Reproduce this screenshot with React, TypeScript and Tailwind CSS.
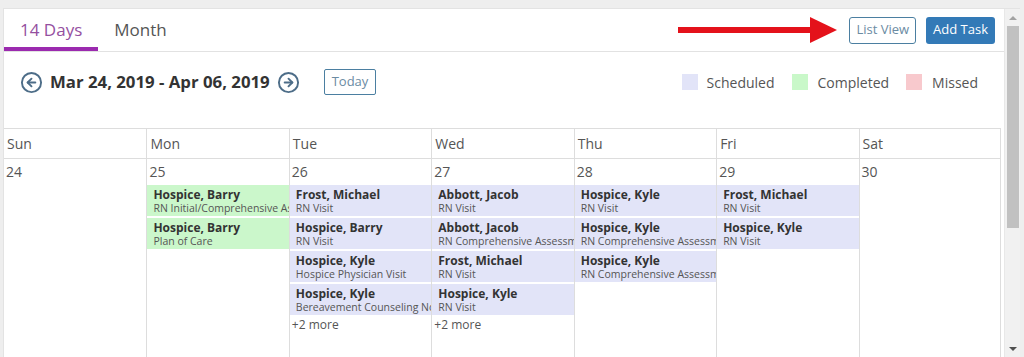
import { CircleArrowLeft, CircleArrowRight } from "lucide-react";

type Task = {
  name: string;
  type: string;
  status: "scheduled" | "completed";
};

interface Day {
  date: number;
  tasks: Task[];
  more?: number;
}

const dayNames = ["Sun", "Mon", "Tue", "Wed", "Thu", "Fri", "Sat"];

const days: Day[] = [
  { date: 24, tasks: [] },
  {
    date: 25,
    tasks: [
      { name: "Hospice, Barry", type: "RN Initial/Comprehensive Assessment", status: "completed" },
      { name: "Hospice, Barry", type: "Plan of Care", status: "completed" },
    ],
  },
  {
    date: 26,
    tasks: [
      { name: "Frost, Michael", type: "RN Visit", status: "scheduled" },
      { name: "Hospice, Barry", type: "RN Visit", status: "scheduled" },
      { name: "Hospice, Kyle", type: "Hospice Physician Visit", status: "scheduled" },
      { name: "Hospice, Kyle", type: "Bereavement Counseling Note", status: "scheduled" },
    ],
    more: 2,
  },
  {
    date: 27,
    tasks: [
      { name: "Abbott, Jacob", type: "RN Visit", status: "scheduled" },
      { name: "Abbott, Jacob", type: "RN Comprehensive Assessment", status: "scheduled" },
      { name: "Frost, Michael", type: "RN Visit", status: "scheduled" },
      { name: "Hospice, Kyle", type: "RN Visit", status: "scheduled" },
    ],
    more: 2,
  },
  {
    date: 28,
    tasks: [
      { name: "Hospice, Kyle", type: "RN Visit", status: "scheduled" },
      { name: "Hospice, Kyle", type: "RN Comprehensive Assessment", status: "scheduled" },
      { name: "Hospice, Kyle", type: "RN Comprehensive Assessment", status: "scheduled" },
    ],
  },
  {
    date: 29,
    tasks: [
      { name: "Frost, Michael", type: "RN Visit", status: "scheduled" },
      { name: "Hospice, Kyle", type: "RN Visit", status: "scheduled" },
    ],
  },
  { date: 30, tasks: [] },
];

function TaskCard({ task }: { task: Task }) {
  return (
    <div
      className={`h-[31px] pl-[6px] pt-[3px] overflow-hidden whitespace-nowrap ${
        task.status === "completed" ? "bg-[#cbf7cb]" : "bg-[#e2e4f8]"
      }`}
    >
      <div className="text-[12px] leading-[14px] font-bold text-[#333]">{task.name}</div>
      <div className="text-[10.5px] leading-[12px] text-[#555]">{task.type}</div>
    </div>
  );
}

function RedArrow() {
  return (
    <svg width="160" height="28" viewBox="0 0 160 28" className="mr-[11px]">
      <rect x="0" y="11" width="138" height="6" fill="#e4121b" />
      <polygon points="132,1 159,14 132,27" fill="#e4121b" />
    </svg>
  );
}

function Scrollbar() {
  return (
    <div className="w-4 shrink-0 bg-[#f1f1f1] border-l border-[#e8e8e8] flex flex-col items-center">
      <div className="h-[17px] flex items-center justify-center">
        <div className="w-0 h-0 border-l-[4px] border-r-[4px] border-b-[4px] border-l-transparent border-r-transparent border-b-[#a3a3a3]" />
      </div>
      <div className="w-[12px] h-[202px] bg-[#c1c1c1]" />
      <div className="flex-1" />
      <div className="h-[17px] flex items-center justify-center">
        <div className="w-0 h-0 border-l-[4px] border-r-[4px] border-t-[4px] border-l-transparent border-r-transparent border-t-[#505050]" />
      </div>
    </div>
  );
}

export default function App() {
  return (
    <div className="h-[357px] overflow-hidden bg-[#eeeeee] pt-2 pl-[3px] pr-1 font-['Open_Sans',sans-serif]">
      <div className="flex h-[349px] bg-white border-l border-t border-[#e3e3e3]">
        <div className="flex-1 min-w-0">
          {/* Tabs */}
          <div className="h-[43px] flex items-stretch justify-between border-b border-[#e2e2e2]">
            <div className="flex items-stretch">
              <div className="px-4 pt-1 flex items-center border-b-4 border-[#9b2aaf] text-[17px] text-[#94509f]">
                14 Days
              </div>
              <div className="px-4 pt-1 flex items-center border-b-4 border-transparent text-[17px] text-[#555]">
                Month
              </div>
            </div>
            <div className="flex items-center pr-[9px]">
              <RedArrow />
              <button
                type="button"
                className="h-[27px] px-[6px] border border-[#4b7fa1] rounded-[3px] text-[13px] text-[#6b8ba3] bg-white"
              >
                List View
              </button>
              <button
                type="button"
                className="ml-[10px] h-[27px] px-[7px] rounded-[3px] text-[13px] text-white bg-[#337ab7]"
              >
                Add Task
              </button>
            </div>
          </div>

          {/* Range + legend */}
          <div className="h-[76px] pt-[17px] flex items-start justify-between pl-[16px] pr-[26px]">
            <div className="h-[26px] flex items-center">
              <CircleArrowLeft className="w-[23px] h-[23px] text-[#4d6d88]" strokeWidth={2} />
              <span className="ml-[7px] text-[16.8px] font-bold text-[#333]">
                Mar 24, 2019 - Apr 06, 2019
              </span>
              <CircleArrowRight className="ml-[7px] w-[23px] h-[23px] text-[#4d6d88]" strokeWidth={2} />
              <button
                type="button"
                className="ml-[24px] h-[26px] px-[7px] border border-[#4b7fa1] rounded-[2px] text-[13px] text-[#6b8ba3]"
              >
                Today
              </button>
            </div>
            <div className="h-[26px] flex items-center text-[14px] text-[#555]">
              <span className="w-4 h-4 bg-[#e2e4f8]" />
              <span className="ml-[9px]">Scheduled</span>
              <span className="ml-[17px] w-4 h-4 bg-[#c9f8c9]" />
              <span className="ml-[10px]">Completed</span>
              <span className="ml-[17px] w-4 h-4 bg-[#f8c9cd]" />
              <span className="ml-[10px]">Missed</span>
            </div>
          </div>

          {/* Calendar */}
          <div className="w-[997px] border-t border-[#dddddd]">
            <div className="grid grid-cols-7 border-b border-[#dddddd]">
              {dayNames.map((d, i) => (
                <div
                  key={d}
                  className={`h-[29px] px-[3px] flex items-center text-[14px] text-[#555] ${
                    i > 0 ? "border-l border-[#dddddd]" : ""
                  } ${i === 6 ? "border-r" : ""}`}
                >
                  {d}
                </div>
              ))}
            </div>
            <div className="grid grid-cols-7 h-[220px]">
              {days.map((day, i) => (
                <div
                  key={day.date}
                  className={`min-w-0 ${i > 0 ? "border-l border-[#dddddd]" : ""} ${
                    i === 6 ? "border-r border-[#dddddd]" : ""
                  }`}
                >
                  <div className="h-[26px] px-[2px] pt-[5px] text-[14px] leading-[16px] text-[#555]">
                    {day.date}
                  </div>
                  <div className="flex flex-col gap-[2px]">
                    {day.tasks.map((t, j) => (
                      <TaskCard key={j} task={t} />
                    ))}
                  </div>
                  {day.more && (
                    <div className="pl-[2px] pt-[1px] text-[12px] text-[#555]">+{day.more} more</div>
                  )}
                </div>
              ))}
            </div>
          </div>
        </div>
        <Scrollbar />
      </div>
    </div>
  );
}
